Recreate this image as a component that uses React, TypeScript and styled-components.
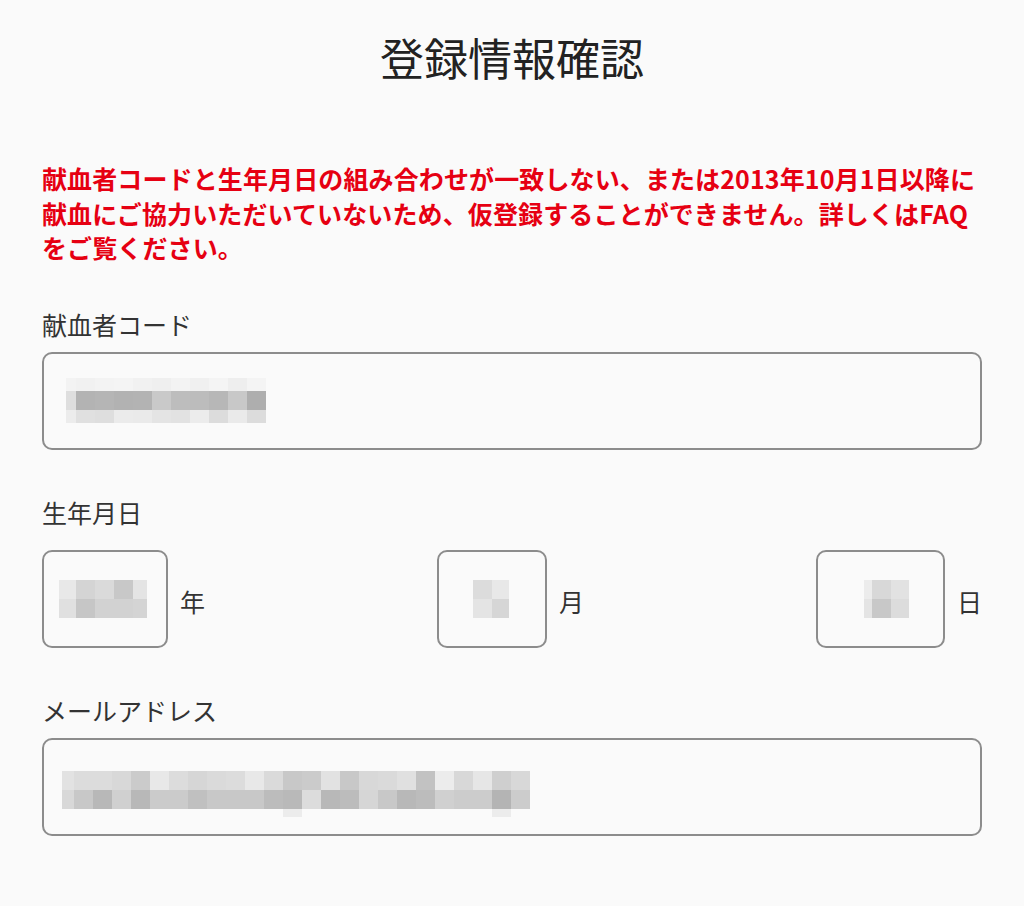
import React from 'react';
import styled, { createGlobalStyle } from 'styled-components';

const bg = '#fafafa';
const line = '#8c8c8c';
const ink = '#333333';
const red = '#e60012';

const GlobalStyle = createGlobalStyle`
  html, body {
    margin: 0;
    padding: 0;
    background: ${bg};
  }
  body {
    font-family: 'Noto Sans CJK JP', 'Noto Sans', sans-serif;
    color: ${ink};
  }
`;

type Grid = { cols: number[]; rows: number[]; cells: string[][] };

// 入力済みの値はモザイクで隠す
const codeMosaic: Grid = {
  cols: [10, 19, 19, 19, 19, 19, 19, 19, 19, 19, 19],
  rows: [13, 19, 13],
  cells: [
    ['#f3f3f3', '#f1f1f1', '#f3f3f3', '#f4f4f4', '#f1f1f1', '#efefef', '#f3f3f3', '#f0f0f0', '#f4f4f4', '#eeeeee', '#f4f4f4'],
    ['#dedede', '#b3b3b3', '#b5b5b5', '#b2b2b2', '#b3b3b3', '#c9c9c9', '#bdbdbd', '#bcbcbc', '#b7b7b7', '#c8c8c8', '#aeaeae'],
    ['#ececec', '#e0e0e0', '#dedede', '#ebebeb', '#eaeaea', '#e4e4e4', '#e2e2e2', '#ececec', '#dcdcdc', '#eaeaea', '#dcdcdc'],
  ],
};

const yearMosaic: Grid = {
  cols: [17, 19, 19, 19, 14],
  rows: [19, 19],
  cells: [
    ['#e8e8e8', '#d4d4d4', '#dadada', '#c8c8c8', '#e4e4e4'],
    ['#e0e0e0', '#c6c6c6', '#d2d2d2', '#d2d2d2', '#d4d4d4'],
  ],
};

const monthMosaic: Grid = {
  cols: [19, 17],
  rows: [19, 19],
  cells: [
    ['#dcdcdc', '#e8e8e8'],
    ['#e4e4e4', '#d6d6d6'],
  ],
};

const dayMosaic: Grid = {
  cols: [8, 19, 18],
  rows: [19, 19],
  cells: [
    ['#ececec', '#d8d8d8', '#e2e2e2'],
    ['#e4e4e4', '#c8c8c8', '#dcdcdc'],
  ],
};

const mailTop = ['#e2e2e2', '#dcdcdc', '#dcdcdc', '#d8d8d8', '#cbcbcb', '#e8e8e8', '#dcdcdc', '#d6d6d6', '#dadada', '#dcdcdc', '#e8e8e8', '#dadada', '#c8c8c8', '#cbcbcb', '#e2e2e2', '#c8c8c8', '#d8d8d8', '#dadada', '#e0e0e0', '#c2c2c2', '#ececec', '#d8d8d8', '#e6e6e6', '#cfcfcf', '#d8d8d8'];
const mailBottom = ['#d8d8d8', '#c8c8c8', '#b8b8b8', '#d0d0d0', '#b8b8b8', '#cbcbcb', '#cbcbcb', '#c0c0c0', '#c8c8c8', '#c8c8c8', '#c8c8c8', '#bcbcbc', '#b9b9b9', '#dcdcdc', '#b8b8b8', '#bcbcbc', '#d6d6d6', '#c8c8c8', '#b8b8b8', '#bcbcbc', '#d0d0d0', '#cccccc', '#cccccc', '#b4b4b4', '#cccccc'];
const mailTail = mailTop.map((_, i) => (i === 12 || i === 23 ? '#ececec' : 'transparent'));

const mailMosaic: Grid = {
  cols: [12, ...Array(24).fill(19)],
  rows: [19, 19, 8],
  cells: [mailTop, mailBottom, mailTail],
};

const Mosaic = ({ cols, rows, cells }: Grid) => (
  <MosaicGrid
    $cols={cols.map((c) => `${c}px`).join(' ')}
    $rows={rows.map((r) => `${r}px`).join(' ')}
  >
    {cells.flatMap((row, r) => row.map((c, i) => <MosaicCell key={`${r}-${i}`} $c={c} />))}
  </MosaicGrid>
);

const App = () => {
  return (
    <Page>
      <GlobalStyle />
      <Title>登録情報確認</Title>

      <ErrorText>
        献血者コードと生年月日の組み合わせが一致しない、または2013年10月1日以降に献血にご協力いただいていないため、仮登録することができません。詳しくはFAQをご覧ください。
      </ErrorText>

      {/* 献血者コード */}
      <Section>
        <Label>献血者コード</Label>
        <InputBox $pad={22}>
          <Mosaic {...codeMosaic} />
        </InputBox>
      </Section>

      {/* 生年月日 */}
      <Section>
        <Label>生年月日</Label>
        <DateRow>
          <DateGroup>
            <DateBox $w={126} $pad={15}>
              <Mosaic {...yearMosaic} />
            </DateBox>
            <Unit>年</Unit>
          </DateGroup>
          <DateGroup>
            <DateBox $w={110} $pad={34}>
              <Mosaic {...monthMosaic} />
            </DateBox>
            <Unit>月</Unit>
          </DateGroup>
          <DateGroup>
            <DateBox $w={129} $pad={46}>
              <Mosaic {...dayMosaic} />
            </DateBox>
            <Unit>日</Unit>
          </DateGroup>
        </DateRow>
      </Section>

      {/* メールアドレス */}
      <Section>
        <Label>メールアドレス</Label>
        <InputBox $pad={18} $top={31}>
          <Mosaic {...mailMosaic} />
        </InputBox>
      </Section>
    </Page>
  );
};

const Page = styled.div`
  width: 1024px;
  min-height: 906px;
  box-sizing: border-box;
  padding: 27px 42px 0 42px;
  background: ${bg};
`;

const Title = styled.h1`
  margin: 0;
  font-size: 44px;
  font-weight: 400;
  line-height: 60px;
  text-align: center;
  color: #222222;
`;

const ErrorText = styled.p`
  margin: 74px 0 0 0;
  font-size: 25px;
  font-weight: 700;
  line-height: 34.5px;
  letter-spacing: 0.12px;
  color: ${red};
`;

const Section = styled.section`
  margin-top: 41px;
  display: flex;
  flex-direction: column;

  & + & {
    margin-top: 44px;
  }
`;

const Label = styled.div`
  font-size: 25px;
  line-height: 36px;
  color: ${ink};
`;

const InputBox = styled.div<{ $pad: number; $top?: number }>`
  margin-top: 10px;
  height: 98px;
  box-sizing: border-box;
  border: 2px solid ${line};
  border-radius: 10px;
  display: flex;
  align-items: ${(p) => (p.$top ? 'flex-start' : 'center')};
  padding-left: ${(p) => p.$pad}px;
  padding-top: ${(p) => p.$top ?? 0}px;
`;

const DateRow = styled.div`
  margin-top: 20px;
  display: flex;
  justify-content: space-between;
  align-items: center;
`;

const DateGroup = styled.div`
  display: flex;
  align-items: center;
  gap: 12px;
`;

const DateBox = styled.div<{ $w: number; $pad: number }>`
  width: ${(p) => p.$w}px;
  height: 98px;
  box-sizing: border-box;
  border: 2px solid ${line};
  border-radius: 10px;
  display: flex;
  align-items: center;
  padding-left: ${(p) => p.$pad}px;
`;

const Unit = styled.span`
  font-size: 25px;
  line-height: 36px;
  color: ${ink};
  padding-top: 4px;
`;

const MosaicGrid = styled.div<{ $cols: string; $rows: string }>`
  display: grid;
  grid-template-columns: ${(p) => p.$cols};
  grid-template-rows: ${(p) => p.$rows};
`;

const MosaicCell = styled.div<{ $c: string }>`
  background: ${(p) => p.$c};
`;

export default App;
